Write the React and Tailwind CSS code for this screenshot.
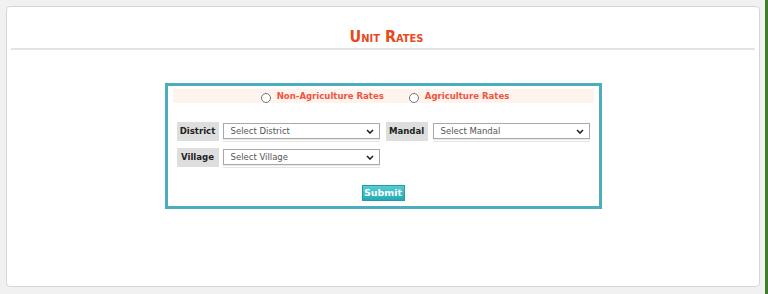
import React, { useState } from "react";

const font = { fontFamily: '"DejaVu Sans", Verdana, sans-serif' };
const condensed = { fontFamily: '"DejaVu Sans Condensed", "DejaVu Sans", sans-serif' };

const Select = ({ placeholder }) => (
  <div className="border-b border-[#e6e6e6] pb-[2px] pt-[2px]">
    <div className="flex h-[16px] w-[157px] items-center justify-between border border-[#a9a9a9] bg-white pl-[7px] pr-[5px] shadow-[0_1px_1px_rgba(0,0,0,0.08)]">
      <span className="text-[8.5px] leading-none text-[#555]" style={font}>
        {placeholder}
      </span>
      <svg width="8" height="5" viewBox="0 0 8 5">
        <path d="M1 1 L4 4 L7 1" fill="none" stroke="#222" strokeWidth="1.6" />
      </svg>
    </div>
  </div>
);

const Label = ({ children }) => (
  <div
    className="flex h-[19px] w-[42px] items-center justify-center bg-[#dedede] text-[9.5px] font-bold text-[#222]"
    style={condensed}
  >
    {children}
  </div>
);

const Radio = ({ checked, onClick, label }) => (
  <label className="flex cursor-pointer items-center" onClick={onClick}>
    <span className="mt-[4px] mr-[6px] flex h-[10px] w-[10px] items-center justify-center rounded-full border border-[#777] bg-white">
      {checked && <span className="h-[5px] w-[5px] rounded-full bg-[#333]" />}
    </span>
    <span className="text-[9.5px] font-bold text-[#f0553f]" style={condensed}>
      {label}
    </span>
  </label>
);

const App = () => {
  const [rate, setRate] = useState(null);

  return (
    <div className="relative h-[294px] w-[768px] overflow-hidden bg-[#f1f1f1]">
      {/* green strip on the far right edge */}
      <div className="absolute right-0 top-0 h-full w-[3px] bg-[#3f7d2c]" />

      <div className="ml-[6px] mt-[6px] h-[281px] w-[754px] rounded-[4px] border border-[#d6d6d6] bg-white">
        <h1
          className="pl-[7px] pt-[20px] text-center text-[16px] font-bold leading-[20px] text-[#e8491d] [font-variant:small-caps]"
          style={condensed}
        >
          Unit Rates
        </h1>
        <div className="mx-[4px] mt-[1px] h-[2px] bg-[#e3e3e3]" />

        <div className="mx-auto mt-[33px] h-[126px] w-[437px] border-[3px] border-[#4aaebf] px-[5px] pt-[3px]">
          <div className="flex h-[14px] items-center justify-center gap-[25px] bg-[#fff3ee] pl-[4px]">
            <Radio
              checked={rate === "non"}
              onClick={() => setRate("non")}
              label="Non-Agriculture Rates"
            />
            <Radio
              checked={rate === "agri"}
              onClick={() => setRate("agri")}
              label="Agriculture Rates"
            />
          </div>

          <div className="ml-[4px] mt-[18px] flex flex-col gap-[5px]">
            <div className="flex items-center">
              <Label>District</Label>
              <div className="ml-[4px]">
                <Select placeholder="Select District" />
              </div>
              <div className="ml-[6px]">
                <Label>Mandal</Label>
              </div>
              <div className="ml-[5px]">
                <Select placeholder="Select Mandal" />
              </div>
            </div>
            <div className="flex items-center">
              <Label>Village</Label>
              <div className="ml-[4px]">
                <Select placeholder="Select Village" />
              </div>
            </div>
          </div>

          <div className="mt-[17px] flex justify-center">
            <button
              className="h-[16px] w-[43px] border border-[#2a9aa3] bg-gradient-to-b from-[#4fd0d8] to-[#22a9b3] text-[9.5px] font-bold leading-none text-white"
              style={font}
            >
              Submit
            </button>
          </div>
        </div>
      </div>
    </div>
  );
};

export default App;
